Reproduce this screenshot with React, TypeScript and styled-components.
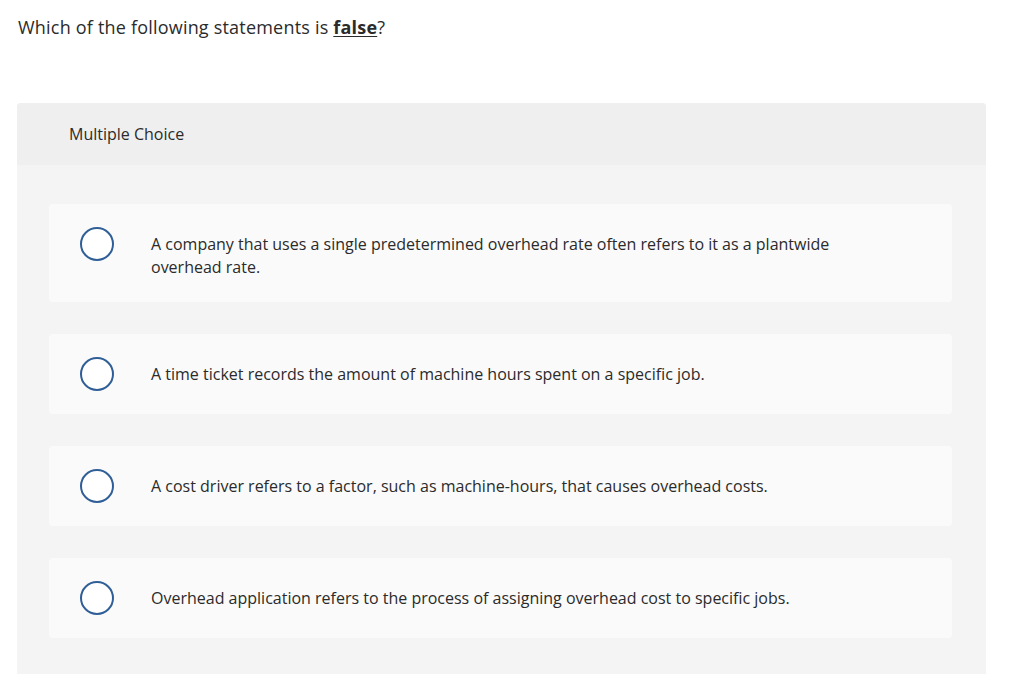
import React from 'react';
import styled, {createGlobalStyle} from 'styled-components';

const GlobalStyle = createGlobalStyle`
    body {
        margin: 0;
        background: #ffffff;
        font-family: "Open Sans", Lato, sans-serif;
        color: #2b2b2b;
    }
`;

const Page = styled.div`
    padding: 15px 38px 0 17px;
`;

const Question = styled.p`
    margin: 0 0 0 1px;
    font-size: 18px;
    line-height: 24px;
    letter-spacing: 0.2px;
    color: #2b2b2b;
`;

const Emphasis = styled.strong`
    font-weight: 700;
    text-decoration: underline;
    text-underline-offset: 2px;
`;

const Panel = styled.section`
    margin-top: 64px;
    background: #f4f4f4;
    border-radius: 4px 4px 0 0;
    overflow: hidden;
`;

const PanelHeader = styled.header`
    height: 62px;
    display: flex;
    align-items: center;
    padding-left: 52px;
    background: #efefef;
    font-size: 16px;
    color: #2b2b2b;
`;

const OptionList = styled.div`
    display: flex;
    flex-direction: column;
    gap: 32px;
    padding: 39px 34px 37px 32px;
`;

const OptionCard = styled.label`
    display: flex;
    align-items: flex-start;
    gap: 37px;
    padding: 23px 24px 23px 31px;
    background: #fafafa;
    border-radius: 4px;
    cursor: pointer;
`;

const Radio = styled.span`
    flex: none;
    width: 34px;
    height: 34px;
    box-sizing: border-box;
    border: 2px solid #2f5f96;
    border-radius: 50%;
    background: #ffffff;
`;

const OptionText = styled.span`
    margin-top: 6px;
    font-size: 16px;
    line-height: 23px;
    color: #2b2b2b;
    max-width: 720px;
`;

const options = [
    'A company that uses a single predetermined overhead rate often refers to it as a plantwide overhead rate.',
    'A time ticket records the amount of machine hours spent on a specific job.',
    'A cost driver refers to a factor, such as machine-hours, that causes overhead costs.',
    'Overhead application refers to the process of assigning overhead cost to specific jobs.',
];

const App = () => {
    return (
        <>
            <GlobalStyle />
            <Page>
                <Question>
                    Which of the following statements is <Emphasis>false</Emphasis>?
                </Question>
                <Panel>
                    <PanelHeader>Multiple Choice</PanelHeader>
                    <OptionList>
                        {options.map((text) => (
                            <OptionCard key={text}>
                                <Radio />
                                <OptionText>{text}</OptionText>
                            </OptionCard>
                        ))}
                    </OptionList>
                </Panel>
            </Page>
        </>
    );
};

export default App;
